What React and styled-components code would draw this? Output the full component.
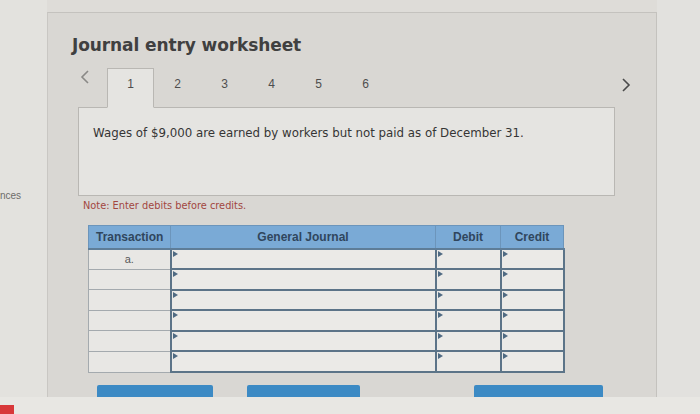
import styled, { createGlobalStyle } from "styled-components";

const GlobalStyle = createGlobalStyle`
    html, body {
        margin: 0;
        padding: 0;
        background: #dedcd8;
    }
    #root {
        width: 700px;
        height: 414px;
        overflow: hidden;
    }
`;

const tabs = [1, 2, 3, 4, 5, 6];
const rows = ["a.", "", "", "", "", ""];

function Marker() {
    return (
        <MarkerSvg width="5" height="6" viewBox="0 0 5 6">
            <path d="M0 0 L5 3 L0 6 Z" fill="#4f6a82" />
        </MarkerSvg>
    );
}

function App() {
    return (
        <>
            <GlobalStyle />
            <Screen>
                <Main>
                    <Sidebar>
                        <SideLabel>nces</SideLabel>
                    </Sidebar>
                    <Card>
                        <Title>Journal entry worksheet</Title>

                        <TabRow>
                            <TabStrip>
                                <Arrow>
                                    <svg width="10" height="14" viewBox="0 0 10 14">
                                        <path d="M8 1 L2 7 L8 13" fill="none" stroke="#8a8986" strokeWidth="1.6" />
                                    </svg>
                                </Arrow>
                                {tabs.map((t) => (
                                    <Tab key={t} $active={t === 1}>
                                        {t}
                                    </Tab>
                                ))}
                            </TabStrip>
                            <NextArrow>
                                <svg width="10" height="14" viewBox="0 0 10 14">
                                    <path d="M2 1 L8 7 L2 13" fill="none" stroke="#4a4a4a" strokeWidth="1.6" />
                                </svg>
                            </NextArrow>
                        </TabRow>

                        <Prompt>Wages of $9,000 are earned by workers but not paid as of December 31.</Prompt>

                        <Note>Note: Enter debits before credits.</Note>

                        <Table>
                            <thead>
                                <tr>
                                    <Th $w={82} $align="left">Transaction</Th>
                                    <Th $w={265}>General Journal</Th>
                                    <Th $w={65}>Debit</Th>
                                    <Th $w={63}>Credit</Th>
                                </tr>
                            </thead>
                            <tbody>
                                {rows.map((r, i) => (
                                    <tr key={i}>
                                        <TxCell>{r}</TxCell>
                                        <EntryCell>
                                            <Marker />
                                        </EntryCell>
                                        <EntryCell>
                                            <Marker />
                                        </EntryCell>
                                        <EntryCell>
                                            <Marker />
                                        </EntryCell>
                                    </tr>
                                ))}
                            </tbody>
                        </Table>

                        <ButtonRow>
                            <ActionButton $w={116} />
                            <ActionButton $w={113} $ml={34} />
                            <ActionButton $w={129} $ml={114} />
                        </ButtonRow>
                    </Card>
                    <RightSpace />
                </Main>
                <BottomStrip>
                    <RedMark />
                </BottomStrip>
            </Screen>
        </>
    );
}

const Screen = styled.div`
    display: flex;
    flex-direction: column;
    width: 700px;
    height: 414px;
    font-family: "DejaVu Sans", Verdana, sans-serif;
`;

const Main = styled.div`
    display: flex;
    flex: 1;
    padding-top: 12px;
    min-height: 0;
`;

const Sidebar = styled.div`
    width: 47px;
    margin-top: -12px;
    background: #e3e2de;
    padding-top: 190px;
`;

const SideLabel = styled.div`
    font-family: "Liberation Sans", Arial, sans-serif;
    font-size: 10px;
    color: #6d6c69;
`;

const Card = styled.div`
    width: 610px;
    background: #d9d7d3;
    border-top: 1px solid #c4c2be;
    border-left: 1px solid #c9c7c3;
    border-right: 1px solid #c4c2be;
    padding: 20px 0 0 24px;
    box-sizing: border-box;
    overflow: hidden;
`;

const RightSpace = styled.div`
    flex: 1;
    margin-top: -12px;
    background: #e2e1de;
`;

const Title = styled.h1`
    margin: 0;
    font-family: "DejaVu Sans", Verdana, sans-serif;
    font-size: 17px;
    font-weight: bold;
    color: #404040;
    letter-spacing: -0.1px;
    line-height: 24px;
`;

const TabRow = styled.div`
    display: flex;
    align-items: flex-end;
    margin: 10px 0 0 6px;
`;

const TabStrip = styled.div`
    display: flex;
    align-items: flex-end;
    width: 537px;
    height: 41px;
    border-bottom: 1px solid #b9b7b3;
    box-sizing: border-box;
`;

const Arrow = styled.div`
    width: 29px;
    align-self: flex-start;
    padding: 2px 0 0 2px;
    box-sizing: border-box;
`;

const NextArrow = styled.div`
    margin: 0 0 12px 6px;
`;

const Tab = styled.div`
    width: 47px;
    height: 40px;
    display: flex;
    align-items: center;
    justify-content: center;
    box-sizing: border-box;
    font-family: "Liberation Sans", Arial, sans-serif;
    font-size: 12px;
    color: #4e4e4e;
    margin-bottom: -1px;
    border: 1px solid ${(p) => (p.$active ? "#b9b7b3" : "transparent")};
    border-bottom: 1px solid ${(p) => (p.$active ? "#e5e4e1" : "#b9b7b3")};
    background: ${(p) => (p.$active ? "#e5e4e1" : "transparent")};
    padding-bottom: 8px;
`;

const Prompt = styled.div`
    width: 537px;
    height: 88px;
    margin-left: 6px;
    box-sizing: border-box;
    background: #e5e4e1;
    border: 1px solid #b9b7b3;
    border-top: none;
    padding: 18px 0 0 14px;
    font-size: 11.8px;
    color: #353535;
`;

const Note = styled.div`
    margin: 3px 0 0 11px;
    font-size: 9.8px;
    color: #a2463f;
    line-height: 14px;
`;

const Table = styled.table`
    margin: 12px 0 0 16px;
    border-collapse: collapse;
    width: 475px;
    table-layout: fixed;
`;

const Th = styled.th`
    width: ${(p) => p.$w}px;
    height: 23px;
    padding: 0 7px;
    background: #7aaad6;
    border: 1px solid #6c95bb;
    border-bottom: 2px solid #5e7d98;
    font-family: "Liberation Sans", Arial, sans-serif;
    font-size: 12px;
    font-weight: bold;
    color: #30465d;
    text-align: ${(p) => p.$align || "center"};
    box-sizing: border-box;
`;

const TxCell = styled.td`
    height: 18.6px;
    padding: 0;
    background: #e8e7e4;
    border: 1px solid #a4aaae;
    border-right: 2px solid #5c7488;
    font-family: "Liberation Sans", Arial, sans-serif;
    font-size: 11px;
    color: #5a5a5a;
    text-align: center;
    vertical-align: middle;
`;

const EntryCell = styled.td`
    position: relative;
    height: 18.6px;
    padding: 0;
    background: #ebeae7;
    border: 2px solid #5c7488;
    border-top-width: 1px;
`;

const MarkerSvg = styled.svg`
    position: absolute;
    left: 1px;
    top: 1px;
`;

const ButtonRow = styled.div`
    display: flex;
    margin: 12px 0 0 25px;
`;

const ActionButton = styled.div`
    width: ${(p) => p.$w}px;
    margin-left: ${(p) => p.$ml || 0}px;
    height: 20px;
    background: #3c8ac4;
    border-radius: 2px;
`;

const BottomStrip = styled.div`
    height: 17px;
    background: #e8e7e3;
    display: flex;
    align-items: flex-end;
`;

const RedMark = styled.div`
    width: 14px;
    height: 9px;
    background: #d8383a;
`;

export default App;
